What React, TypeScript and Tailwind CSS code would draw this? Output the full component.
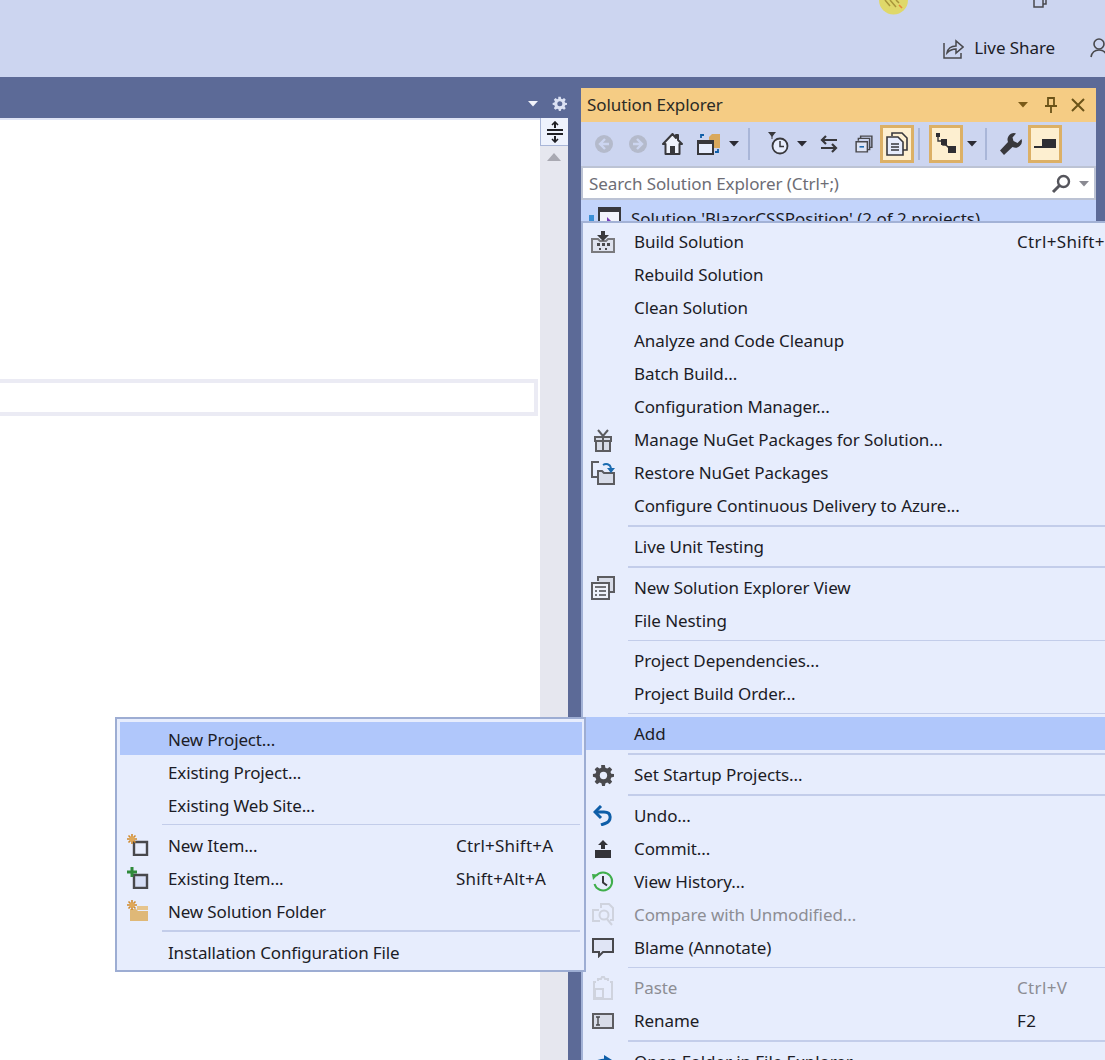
import React from 'react';

const Sep = ({ size, left }: { size: number; left: string }) => (
  <div className={`flex items-center ${size === 7 ? 'h-[7px]' : 'h-[8px]'}`}>
    <div className={`flex-1 bg-[#c3cdea] ${size === 7 ? 'h-px' : 'h-[2px]'} ${left}`} />
  </div>
);

const Caret = ({ color = '#2b2b33' }: { color?: string }) => (
  <svg width="10" height="6" viewBox="0 0 10 6"><path d="M0 0h10L5 5.5z" fill={color} /></svg>
);

const BuildIcon = () => (
  <svg width="24" height="24" viewBox="0 0 24 24">
    <path d="M1 9h6l2 2h6l2-2h6v13H1z" fill="#dfe3ef" stroke="#7a7a7e" strokeWidth="2" />
    <path d="M10 1h4v4h4l-6 6-6-6h4z" fill="#3a3a3e" />
    <path d="M6 13h3v3H6zM11 13h3v3h-3zM16 13h3v3h-3zM8 18h2v2H8zM14 18h2v2h-2z" fill="#4a4a4e" />
  </svg>
);
const GiftIcon = () => (
  <svg width="18" height="24" viewBox="0 0 18 24">
    <path d="M1 9h16v4H1zM2 13h14v10H2z" fill="#d8dce8" stroke="#5c5c60" strokeWidth="2" />
    <path d="M9 8v15" stroke="#5c5c60" strokeWidth="2" />
    <path d="M4 2l5 6 5-6" fill="none" stroke="#5c5c60" strokeWidth="2" />
  </svg>
);
const RestoreIcon = () => (
  <svg width="24" height="24" viewBox="0 0 24 24">
    <path d="M8 1H1v15h5" fill="none" stroke="#5c5c60" strokeWidth="2" />
    <path d="M7 10h4l2 2h10v11H7z" fill="#d8dce8" stroke="#5c5c60" strokeWidth="2" />
    <path d="M12 4c3-2 7-1 8 3" fill="none" stroke="#1b6bb0" strokeWidth="2" />
    <path d="M16 7h8l-4 5z" fill="#1b6bb0" />
  </svg>
);
const NewViewIcon = () => (
  <svg width="24" height="24" viewBox="0 0 24 24">
    <path d="M7 5V1h16v15h-4" fill="#d8dce8" stroke="#5c5c60" strokeWidth="2" />
    <path d="M1 7h17v16H1z" fill="#eef1fa" stroke="#5c5c60" strokeWidth="2" />
    <path d="M4 11h11M4 15h2M8 15h7M4 19h2M8 19h7" stroke="#4a4a4e" strokeWidth="1.6" />
  </svg>
);
const GearIcon = ({ color = '#4a4a4e', hole = '#e7edfd', size = 22 }: { color?: string; hole?: string; size?: number }) => (
  <svg width={size} height={size} viewBox="0 0 24 24">
    <path
      d="M10 1h4l.6 3.2 2 .8L19.3 3.200 22 6l-1.900 2.600.9 2L24 11v3l-3 .8-.8 2L22 19.400 19.400 22l-2.700-1.800-2 .8L14 24h-3l-.7-3-2-.8L5.500 22 2.900 19.400 4.700 16.800l-.9-2L1 14v-3l2.800-.6.900-2L2.900 5.800 5.600 3.200 8.200 5l1.900-.8z"
      fill={color}
    />
    <circle cx="12.500" cy="12.500" r="4" fill={hole} />
  </svg>
);
const UndoIcon = () => (
  <svg width="20" height="21" viewBox="0 0 20 21" fill="none" stroke="#0e5ea8" strokeWidth="3">
    <path d="M8 1L2 7l6 6" />
    <path d="M3 7h8c8 0 8 9 1 11.500L8 20" />
  </svg>
);
const CommitIcon = () => (
  <svg width="16" height="18" viewBox="0 0 16 18">
    <path d="M0 10h16v8H0z" fill="#333338" />
    <path d="M8 0l5 5h-3v4H6V5H3z" fill="#333338" />
  </svg>
);
const HistoryIcon = () => (
  <svg width="22" height="22" viewBox="0 0 22 22">
    <path d="M4 5a9 9 0 1 1-1.500 8" fill="none" stroke="#3fae4b" strokeWidth="2" />
    <path d="M0 3l6 .5L1 9z" fill="#3fae4b" />
    <path d="M11 5v6.500l4 3" fill="none" stroke="#38383c" strokeWidth="2" />
  </svg>
);
const CompareIcon = () => (
  <svg width="22" height="24" viewBox="0 0 22 24" fill="none" stroke="#cfd3de" strokeWidth="2">
    <path d="M9 5V1h8l4 4v12h-3" />
    <path d="M7 7H1v11h7" />
    <circle cx="12" cy="12" r="4.500" />
    <path d="M15 16l5 6" />
  </svg>
);
const BlameIcon = () => (
  <svg width="22" height="20" viewBox="0 0 22 20">
    <path d="M1 1h20v13H11l-4 4v-4H1z" fill="#e0e5f5" stroke="#48484c" strokeWidth="2" />
  </svg>
);
const PasteIcon = () => (
  <svg width="20" height="24" viewBox="0 0 20 24" fill="none" stroke="#cfd3de" strokeWidth="2">
    <path d="M5 5V3h3l1-2h2l1 2h3v2" />
    <path d="M3 6H1v17h18V6h-2" />
    <path d="M2 13h8v9H2z" />
  </svg>
);
const RenameIcon = () => (
  <svg width="22" height="16" viewBox="0 0 22 16">
    <path d="M1 1h20v14H1z" fill="#d8dce8" stroke="#5c5c60" strokeWidth="2" />
    <path d="M4 4h4M6 4v8M4 12h4" stroke="#48484c" strokeWidth="1.400" />
  </svg>
);
const OpenFolderIcon = () => (
  <svg width="22" height="14" viewBox="0 0 22 14">
    <path d="M1 13C2 7 7 5 14 5" fill="none" stroke="#0e5ea8" strokeWidth="3" />
    <path d="M12 0l8 5-8 5z" fill="#0e5ea8" />
  </svg>
);
const Spark = ({ x, y }: { x: number; y: number }) => (
  <g transform={`translate(${x} ${y})`}>
    <path d="M0-5v10M-5 0h10M-3.500-3.500l7 7M-3.500 3.500l7-7" stroke="#d08a2e" strokeWidth="1.600" />
    <circle r="2.500" fill="#e0a95a" />
  </g>
);
const NewItemIcon = () => (
  <svg width="22" height="22" viewBox="0 0 22 22">
    <path d="M7 8h13v13H7z" fill="#e7edfd" stroke="#48484c" strokeWidth="2.400" />
    <Spark x={5} y={5} />
  </svg>
);
const ExistingItemIcon = () => (
  <svg width="22" height="22" viewBox="0 0 22 22">
    <path d="M7 8h13v13H7z" fill="#d6def6" stroke="#48484c" strokeWidth="2.400" />
    <path d="M3.500 0h3v3.500H10v3H6.500V10h-3V6.500H0v-3h3.500z" fill="#2f8a3a" />
  </svg>
);
const NewFolderIcon = () => (
  <svg width="22" height="22" viewBox="0 0 22 22">
    <path d="M3 9h6l2 2h10v10H3z" fill="#dfb877" />
    <path d="M10 6h11v4H10z" fill="#e6c48c" />
    <Spark x={5} y={5} />
  </svg>
);

type Row = { label?: string; key2?: string; icon?: React.ReactNode; off?: boolean; on?: boolean; sep?: number };

const mainMenu: Row[] = [
  { label: 'Build Solution', key2: 'Ctrl+Shift+B', icon: <BuildIcon /> },
  { label: 'Rebuild Solution' },
  { label: 'Clean Solution' },
  { label: 'Analyze and Code Cleanup' },
  { label: 'Batch Build...' },
  { label: 'Configuration Manager...' },
  { label: 'Manage NuGet Packages for Solution...', icon: <GiftIcon /> },
  { label: 'Restore NuGet Packages', icon: <RestoreIcon /> },
  { label: 'Configure Continuous Delivery to Azure...' },
  { sep: 8 },
  { label: 'Live Unit Testing' },
  { sep: 8 },
  { label: 'New Solution Explorer View', icon: <NewViewIcon /> },
  { label: 'File Nesting' },
  { sep: 7 },
  { label: 'Project Dependencies...' },
  { label: 'Project Build Order...' },
  { sep: 7 },
  { label: 'Add', on: true },
  { sep: 8 },
  { label: 'Set Startup Projects...', icon: <GearIcon /> },
  { sep: 8 },
  { label: 'Undo...', icon: <UndoIcon /> },
  { label: 'Commit...', icon: <CommitIcon /> },
  { label: 'View History...', icon: <HistoryIcon /> },
  { label: 'Compare with Unmodified...', icon: <CompareIcon />, off: true },
  { label: 'Blame (Annotate)', icon: <BlameIcon /> },
  { sep: 7 },
  { label: 'Paste', key2: 'Ctrl+V', icon: <PasteIcon />, off: true },
  { label: 'Rename', key2: 'F2', icon: <RenameIcon /> },
  { sep: 8 },
  { label: 'Open Folder in File Explorer', icon: <OpenFolderIcon /> },
];

const addMenu: Row[] = [
  { label: 'New Project...', on: true },
  { label: 'Existing Project...' },
  { label: 'Existing Web Site...' },
  { sep: 7 },
  { label: 'New Item...', key2: 'Ctrl+Shift+A', icon: <NewItemIcon /> },
  { label: 'Existing Item...', key2: 'Shift+Alt+A', icon: <ExistingItemIcon /> },
  { label: 'New Solution Folder', icon: <NewFolderIcon /> },
  { sep: 8 },
  { label: 'Installation Configuration File' },
];

const ToolSep = ({ className = '' }: { className?: string }) => <div className={`w-[2px] h-[32px] bg-[#a9b6d8] ${className}`} />;

const ActiveBox = ({ children, className = '' }: { children: React.ReactNode; className?: string }) => (
  <div className={`w-[34px] h-[38px] flex items-center justify-center bg-[#fdefd0] border-[3px] border-[#dcb066] ${className}`}>{children}</div>
);

const Toolbar = () => (
  <div className="h-[44px] bg-[#ccd5f0] flex items-center pl-[6px]">
    <div className="w-[34px] flex justify-center">
      <svg width="18" height="18" viewBox="0 0 18 18"><circle cx="9" cy="9" r="9" fill="#b4bacb" /><path d="M10 4L5 9l5 5M5 9h9" stroke="#ccd5f0" strokeWidth="2.400" fill="none" /></svg>
    </div>
    <div className="w-[34px] flex justify-center">
      <svg width="18" height="18" viewBox="0 0 18 18"><circle cx="9" cy="9" r="9" fill="#b4bacb" /><path d="M8 4l5 5-5 5M13 9H4" stroke="#ccd5f0" strokeWidth="2.400" fill="none" /></svg>
    </div>
    <div className="w-[34px] flex justify-center">
      <svg width="21" height="22" viewBox="0 0 21 22">
        <path d="M10.500 1L1 11h2.500v10h14V11H20L16 7V2h-2v3z" fill="#eef1fa" stroke="#38383c" strokeWidth="2" strokeLinejoin="round" />
        <path d="M8 13h5v8H8z" fill="#38383c" />
      </svg>
    </div>
    <div className="w-[36px] ml-[2px] flex justify-center">
      <svg width="24" height="22" viewBox="0 0 24 22">
        <path d="M12 4l3-3h8v14H12z" fill="#d9a85c" />
        <path d="M1 8h15v13H1z" fill="#e7edfd" stroke="#38383c" strokeWidth="2" />
        <path d="M1 8h15v3H1z" fill="#38383c" />
        <path d="M4 5V2h3" stroke="#0e5ea8" strokeWidth="1.800" fill="none" />
        <path d="M21 16v3h-3" stroke="#0e5ea8" strokeWidth="1.800" fill="none" />
      </svg>
    </div>
    <div className="w-[14px] flex justify-center"><Caret /></div>
    <ToolSep className="ml-[7px]" />
    <div className="w-[30px] ml-[14px] flex justify-center">
      <svg width="22" height="24" viewBox="0 0 22 24" fill="none">
        <path d="M0 0h8L4 5z" fill="#38383c" />
        <path d="M4 4v3" stroke="#38383c" />
        <circle cx="12" cy="14" r="7.500" fill="#e7edfd" stroke="#38383c" strokeWidth="1.800" />
        <path d="M12 9v5.500h4" stroke="#38383c" strokeWidth="1.500" />
      </svg>
    </div>
    <div className="w-[14px] ml-[1px] flex justify-center"><Caret /></div>
    <div className="w-[34px] ml-[3px] flex justify-center">
      <svg width="18" height="18" viewBox="0 0 18 18" fill="none" stroke="#38383c" strokeWidth="2.200">
        <path d="M6 1L2 5l4 4M2 5h15M12 9l4 4-4 4M16 13H1" />
      </svg>
    </div>
    <div className="w-[32px] ml-[2px] flex justify-center">
      <svg width="18" height="18" viewBox="0 0 16 16" fill="none" stroke="#48484c" strokeWidth="1.300">
        <path d="M5 3V1h10v10h-2" />
        <path d="M3 5V3h10v10h-2" />
        <path d="M1 6h10v9H1z" fill="#dfe5f6" />
        <path d="M4 10.500h4" stroke="#0e5ea8" />
      </svg>
    </div>
    <ActiveBox>
      <svg width="22" height="24" viewBox="0 0 22 24" fill="none" stroke="#38383c" strokeWidth="1.600">
        <path d="M6 4V1h10l5 5v12h-4" />
        <path d="M1 5h11l5 5v13H1z" fill="#e7edfd" />
        <path d="M5 12h8M5 15h8M5 18h8" />
      </svg>
    </ActiveBox>
    <ToolSep className="ml-[4px]" />
    <ActiveBox className="ml-[9px]">
      <svg width="22" height="22" viewBox="0 0 22 22">
        <path d="M3 3v5h5M8 8v4h4" stroke="#38383c" strokeWidth="1.400" fill="none" />
        <path d="M1 0h4v4H1zM6 6h6v6H6zM13 13h8v7h-8z" fill="#2e2e33" />
        <path d="M10 11l4 4" stroke="#2e2e33" strokeWidth="1.400" />
      </svg>
    </ActiveBox>
    <div className="w-[14px] ml-[2px] flex justify-center"><Caret /></div>
    <ToolSep className="ml-[6px]" />
    <div className="w-[30px] ml-[9px] flex justify-center">
      <svg width="22" height="22" viewBox="0 0 22 22">
        <path d="M14 0a6.500 6.500 0 0 0-6 9L0 17.500 4 22l8.500-8A6.500 6.500 0 0 0 21.500 6l-4 4-4-2-1-3.500 3.500-4z" fill="#38383c" />
      </svg>
    </div>
    <ActiveBox className="ml-[2px]">
      <svg width="22" height="10" viewBox="0 0 22 10">
        <path d="M8 0h14v8H8z" fill="#2e2e33" />
        <path d="M0 7h22v2H0z" fill="#2e2e33" />
      </svg>
    </ActiveBox>
  </div>
);

const Menu = ({ rows, iconW, labelW, keyCls, sepLeft, className }: { rows: Row[]; iconW: string; labelW: string; keyCls: string; sepLeft: string; className: string }) => (
  <div className={className}>
    {rows.map((r, i) =>
      r.sep ? (
        <Sep key={i} size={r.sep} left={sepLeft} />
      ) : (
        <div key={i} className={`h-[33px] flex items-center whitespace-nowrap ${r.on ? 'bg-[#b0c7fb]' : ''} ${r.off ? 'text-[#8d8d94]' : 'text-[#1c1c26]'}`}>
          <div className={`${iconW} shrink-0 flex justify-center items-center`}>{r.icon}</div>
          <div className={`${labelW} shrink-0`}>{r.label}</div>
          <div className={keyCls}>{r.key2}</div>
        </div>
      )
    )}
  </div>
);

export default function App() {
  return (
    <div className="relative w-[1105px] h-[1060px] overflow-hidden bg-[#5c6a97] text-[17px] tracking-[-0.08px] font-['Noto_Sans',sans-serif]">
      {/* top bar */}
      <div className="relative h-[77px] bg-[#ccd5f0]">
        <svg className="absolute left-[879px] top-0" width="29" height="15" viewBox="0 0 29 15">
          <path d="M0 0h29a14.500 14.500 0 0 1-29 0z" fill="#dfd86a" />
          <path d="M6 0l5 6M11 0l6 7M17 0l3 3" stroke="#a8963a" strokeWidth="1.500" />
          <path d="M20 5l3 3" stroke="#e8873a" strokeWidth="1.600" />
        </svg>
        <svg className="absolute left-[1033px] top-0" width="16" height="8" viewBox="0 0 16 8" fill="none" stroke="#48484c" strokeWidth="1.500">
          <path d="M1 0v7h9V0M13 0v4h-3" />
        </svg>
        <div className="flex justify-end items-center h-full pt-[19px] gap-[10px] text-[#1c1c26]">
          <svg width="21" height="21" viewBox="0 0 21 21" fill="none" stroke="#48484c" strokeWidth="1.500">
            <path d="M1 5v15h17v-5" />
            <path d="M4 15c1-5 5-7 9-7V3l7 6-7 6v-4c-3 0-6 1-9 4z" />
          </svg>
          <span className="mr-[25px]">Live Share</span>
          <div className="w-[15px] overflow-hidden">
            <svg width="22" height="24" viewBox="0 0 22 24" fill="none" stroke="#48484c" strokeWidth="1.600">
              <circle cx="9" cy="8" r="5" />
              <path d="M1 21c1-5 4-7 8-7s7 2 8 7" />
            </svg>
          </div>
        </div>
      </div>

      <div className="flex h-[983px]">
        {/* editor area */}
        <div className="w-[568px] shrink-0 flex flex-col">
          <div className="h-[41px] flex justify-end items-center gap-[14px] pt-[12px]">
            <Caret color="#f2f4fb" />
            <div className="w-[16px]"><GearIcon color="#dbe1f3" hole="#5c6a97" size={15} /></div>
          </div>
          <div className="flex flex-1">
            <div className="w-[540px] bg-white pt-[259px] border-t-[2px] border-[#dfe4f5]">
              <div className="h-[37px] w-[538px] border-[4px] border-l-0 border-[#ebebf4]" />
            </div>
            <div className="w-[28px] bg-[#e6e7ef] flex flex-col items-center">
              <div className="w-full h-[28px] bg-[#eef2fd] border-l border-b border-[#a9b6d8] flex items-center justify-center">
                <svg width="16" height="22" viewBox="0 0 16 22" fill="none" stroke="#1f1f24" strokeWidth="2">
                  <path d="M0 9h16M0 13h16M8 1v6M8 15v6" />
                  <path d="M5 4l3-3 3 3M5 18l3 3 3-3" strokeWidth="1.600" />
                </svg>
              </div>
              <svg className="mt-[7px]" width="14" height="8" viewBox="0 0 14 8"><path d="M7 0l7 8H0z" fill="#a9a9b2" /></svg>
            </div>
          </div>
        </div>

        {/* solution explorer */}
        <div className="w-[515px] ml-[13px] mt-[11px] flex flex-col bg-white">
          <div className="h-[34px] bg-[#f5cc84] flex items-center pl-[6px] text-[#2b2b26]">
            <span className="flex-1">Solution Explorer</span>
            <div className="mr-[17px]"><Caret color="#7a5a18" /></div>
            <svg className="mr-[14px]" width="12" height="16" viewBox="0 0 12 16" fill="none" stroke="#6b5318" strokeWidth="1.800">
              <path d="M3 1h6v8H3zM0 9h12M6 9v7" />
            </svg>
            <svg className="mr-[11px]" width="14" height="14" viewBox="0 0 14 14" fill="none" stroke="#6b5318" strokeWidth="2"><path d="M1 1l12 12M13 1L1 13" /></svg>
          </div>
          <Toolbar />
          <div className="h-[34px] bg-white border-y-2 border-x-2 border-[#bcc3d4] flex items-center pl-[6px] pt-[1px] text-[#6d6d75]">
            <span className="flex-1">Search Solution Explorer (Ctrl+;)</span>
            <svg className="mr-[8px]" width="20" height="20" viewBox="0 0 20 20" fill="none" stroke="#55555c" strokeWidth="2.400">
              <circle cx="12.500" cy="7.500" r="5.500" />
              <path d="M8.500 11.500L2 18" strokeWidth="3" />
            </svg>
            <div className="mr-[5px]"><Caret color="#8a8a92" /></div>
          </div>
          <div className="h-[21px] bg-[#c3d4fb] flex items-start pl-[6px] pt-[6px] gap-[10px] text-[#1c1c26] tracking-normal overflow-hidden whitespace-nowrap">
            <svg className="mt-[1px]" width="34" height="24" viewBox="0 0 34 24">
              <path d="M2 8h5v8H2z" fill="#3b8fd6" />
              <path d="M12 1h21v20H12z" fill="#f2f4fb" stroke="#38383c" strokeWidth="2" />
              <path d="M12 1h21v4H12z" fill="#38383c" />
              <path d="M20 10l4 4-4 4z" fill="#7a3db8" />
            </svg>
            <span>Solution 'BlazorCSSPosition' (2 of 2 projects)</span>
          </div>
        </div>
        <div className="flex-1" />
      </div>

      {/* context menu */}
      <Menu
        rows={mainMenu}
        iconW="w-[34px] mr-[14px]"
        labelW="w-[383px]"
        keyCls="tracking-[0.35px]"
        sepLeft="ml-[42px]"
        className="absolute left-[581px] top-[221px] w-[560px] pt-[2px] pl-[3px] bg-[#e7edfd] border-t-[2px] border-l-[2px] border-[#a3b2d6]"
      />

      {/* add submenu */}
      <Menu
        rows={addMenu}
        iconW="w-[36px] mr-[12px]"
        labelW="w-[288px] pt-[2px] tracking-[-0.15px]"
        keyCls="pt-[2px] tracking-[0.2px]"
        sepLeft="ml-[42px] mr-[2px]"
        className="absolute left-[115px] top-[717px] w-[471px] h-[255px] pt-[3px] pb-[3px] pl-[3px] pr-[2px] bg-[#e7edfd] border-2 border-[#9dadd3]"
      />
    </div>
  );
}
